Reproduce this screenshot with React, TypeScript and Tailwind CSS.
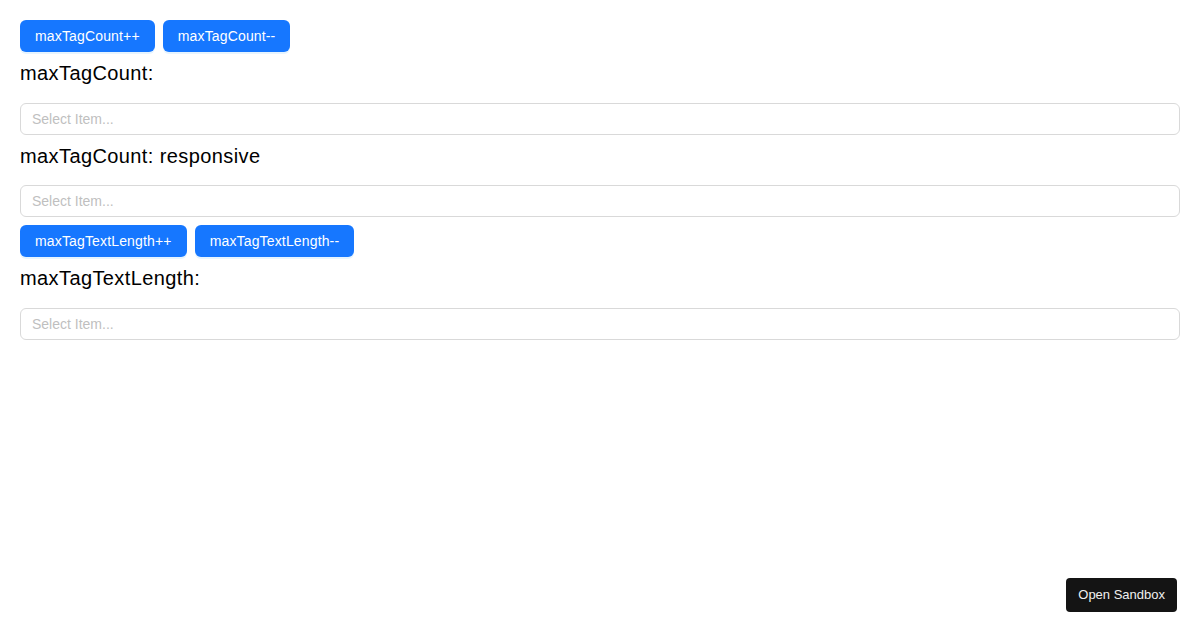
const font = { fontFamily: '"Liberation Sans", Arial, sans-serif' };

function Btn({ label }: { label: string }) {
  return (
    <button className="h-8 rounded-md bg-[#1677ff] px-[15px] text-[14px] tracking-[0.011em] text-white shadow-[0_2px_0_rgba(5,145,255,0.1)]">
      {label}
    </button>
  );
}

function Heading({ text, tight }: { text: string; tight?: boolean }) {
  return (
    <div
      className={
        tight
          ? "pb-[15px] pt-[7px] text-[20px] leading-[28px] tracking-[0.02em] text-black"
          : "pb-[16px] pt-[7px] text-[20px] leading-[28px] tracking-[0.02em] text-black"
      }
    >
      {text}
    </div>
  );
}

function Select() {
  return (
    <div className="flex h-8 items-center rounded-md border border-[#d9d9d9] bg-white px-[11px] text-[14px] text-[#bfbfbf]">
      Select Item...
    </div>
  );
}

export default function App() {
  return (
    <div className="relative h-[630px] w-full bg-white p-5" style={font}>
      <div className="flex gap-2">
        <Btn label="maxTagCount++" />
        <Btn label="maxTagCount--" />
      </div>
      <Heading text="maxTagCount:" />
      <Select />
      <Heading text="maxTagCount: responsive" tight />
      <Select />
      <div className="mt-2 flex gap-2">
        <Btn label="maxTagTextLength++" />
        <Btn label="maxTagTextLength--" />
      </div>
      <Heading text="maxTagTextLength:" />
      <Select />
      <button className="absolute bottom-[18px] right-[23px] h-[34px] rounded bg-[#141414] px-[12px] text-[13px] text-[#f0f0f0]">
        Open Sandbox
      </button>
    </div>
  );
}
